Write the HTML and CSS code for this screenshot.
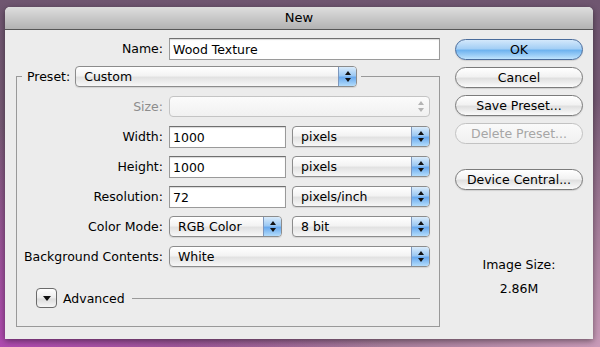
FILE: index.html
```html
<!DOCTYPE html>
<html lang="en">
<head>
    <meta charset="UTF-8">
    <title>New</title>
    <link rel="stylesheet" href="styles.css">
</head>
<body>
    <div class="window">
        <div class="titlebar">New</div>

        <div class="content">
            <div class="main">
                <div class="row name-row">
                    <label class="label">Name:</label>
                    <input class="field name-field" type="text" value="Wood Texture">
                </div>

                <fieldset class="group">
                    <legend class="preset">
                        <span>Preset:</span>
                        <div class="popup preset-popup"><span>Custom</span><i class="arrows"></i></div>
                    </legend>

                    <div class="row">
                        <label class="label disabled">Size:</label>
                        <div class="popup wide off"><span></span><i class="arrows"></i></div>
                    </div>

                    <div class="row">
                        <label class="label">Width:</label>
                        <input class="field num" type="text" value="1000">
                        <div class="popup unit"><span>pixels</span><i class="arrows"></i></div>
                    </div>

                    <div class="row">
                        <label class="label">Height:</label>
                        <input class="field num" type="text" value="1000">
                        <div class="popup unit"><span>pixels</span><i class="arrows"></i></div>
                    </div>

                    <div class="row">
                        <label class="label">Resolution:</label>
                        <input class="field num" type="text" value="72">
                        <div class="popup unit"><span>pixels/inch</span><i class="arrows"></i></div>
                    </div>

                    <div class="row">
                        <label class="label">Color Mode:</label>
                        <div class="popup mode"><span>RGB Color</span><i class="arrows"></i></div>
                        <div class="popup unit"><span>8 bit</span><i class="arrows"></i></div>
                    </div>

                    <div class="row">
                        <label class="label">Background Contents:</label>
                        <div class="popup wide"><span>White</span><i class="arrows"></i></div>
                    </div>

                    <div class="advanced">
                        <button class="disclosure"></button>
                        <span>Advanced</span>
                        <div class="rule"></div>
                    </div>
                </fieldset>
            </div>

            <div class="side">
                <button class="btn default">OK</button>
                <button class="btn">Cancel</button>
                <button class="btn">Save Preset...</button>
                <button class="btn disabled">Delete Preset...</button>
                <button class="btn central">Device Central...</button>

                <div class="image-size">
                    <div>Image Size:</div>
                    <div class="size-value">2.86M</div>
                </div>
            </div>
        </div>
    </div>
</body>
</html>
```

FILE: styles.css
```css
body {
    margin: 0;
    width: 600px;
    height: 347px;
    overflow: hidden;
    font-family: "DejaVu Sans", sans-serif;
    font-size: 12.5px;
    color: #000;
    background:
        radial-gradient(ellipse at 0% 100%, #b04ab0 0%, rgba(176, 74, 176, 0) 45%),
        radial-gradient(ellipse at 100% 100%, #c89ab8 0%, rgba(200, 154, 184, 0) 50%),
        linear-gradient(#6f5670, #87637f);
}

/* Dialog window */
.window {
    margin: 7px 0 0 5px;
    width: 588px;
    height: 332px;
    background-color: #ececec;
    border-radius: 5px 5px 0 0;
    box-shadow: 0 2px 6px rgba(0, 0, 0, 0.45);
    overflow: hidden;
}

.titlebar {
    height: 22px;
    line-height: 22px;
    text-align: center;
    font-size: 13px;
    background: linear-gradient(#dedede, #b2b2b2);
    border-bottom: 1px solid #565656;
}

.content {
    display: flex;
}

.main {
    box-sizing: border-box;
    width: 435px;
    padding-left: 11px;
}

.row {
    display: flex;
    align-items: center;
    gap: 6px;
    height: 21px;
    margin-top: 9px;
}

.name-row {
    margin-top: 8px;
}

.label {
    width: 147px;
    text-align: right;
    flex-shrink: 0;
    white-space: nowrap;
}

.label.disabled {
    color: #8c8c8c;
}

.group .label {
    width: 146px;
}

/* Text fields */
.field {
    box-sizing: border-box;
    height: 22px;
    margin: 0;
    padding: 1px 3px 0;
    font: inherit;
    border: 1px solid #9a9a9a;
    border-top-color: #6f6f6f;
    box-shadow: inset 0 1px 1px rgba(0, 0, 0, 0.15);
    background: #fff;
    outline: none;
}

.name-field {
    width: 271px;
}

.num {
    width: 117px;
}

/* Preset group */
.group {
    margin: 7px 0 0;
    padding: 0 9px 18px 0;
    width: 413px;
    border: 1px solid #999;
    box-sizing: content-box;
}

.preset {
    display: flex;
    align-items: center;
    gap: 5px;
    margin-left: 5px;
    padding: 0 4px 0 5px;
    height: 21px;
}

.preset-popup {
    width: 282px;
}

/* Popup buttons */
.popup {
    box-sizing: border-box;
    display: flex;
    align-items: center;
    height: 21px;
    border: 1px solid #8c8c8c;
    border-radius: 4px;
    background: linear-gradient(#ffffff, #f3f3f3 45%, #e2e2e2 55%, #f7f7f7);
    box-shadow: 0 1px 1px rgba(0, 0, 0, 0.1);
    overflow: hidden;
}

.popup span {
    flex: 1;
    padding-left: 8px;
    white-space: nowrap;
}

.arrows {
    position: relative;
    width: 17px;
    height: 100%;
    border-left: 1px solid #7d97bd;
    background: linear-gradient(#d9ebfb, #9cc9f3 45%, #6aaaee 55%, #b3dcfb);
}

.arrows::before,
.arrows::after {
    content: "";
    position: absolute;
    left: 6px;
    border-left: 3px solid transparent;
    border-right: 3px solid transparent;
}

.arrows::before {
    top: 4px;
    border-bottom: 4px solid #111;
}

.arrows::after {
    bottom: 4px;
    border-top: 4px solid #111;
}

.wide {
    width: 261px;
}

.unit {
    width: 138px;
}

.mode {
    width: 113px;
    margin-right: 4px;
}

.popup.off {
    border-color: #c4c4c4;
    background: linear-gradient(#fbfbfb, #f1f1f1);
    box-shadow: none;
}

.popup.off .arrows {
    border-left: none;
    background: none;
}

.popup.off .arrows::before {
    border-bottom-color: #b4b4b4;
}

.popup.off .arrows::after {
    border-top-color: #b4b4b4;
}

/* Advanced */
.advanced {
    display: flex;
    align-items: center;
    margin-top: 21px;
    padding-left: 19px;
    padding-right: 10px;
    height: 20px;
}

.disclosure {
    position: relative;
    width: 21px;
    height: 20px;
    padding: 0;
    margin-right: 6px;
    border: 1px solid #6b6b6b;
    border-radius: 4px;
    background: linear-gradient(#ffffff, #ececec 50%, #dcdcdc 55%, #f6f6f6);
}

.disclosure::after {
    content: "";
    position: absolute;
    left: 6px;
    top: 7px;
    border-left: 4px solid transparent;
    border-right: 4px solid transparent;
    border-top: 5px solid #111;
}

.advanced .rule {
    flex: 1;
    margin-left: 7px;
    border-top: 1px solid #9a9a9a;
}

/* Right column */
.side {
    display: flex;
    flex-direction: column;
    margin-left: 15px;
    padding-top: 9px;
    width: 128px;
}

.btn {
    height: 21px;
    margin: 0 0 7px;
    padding: 0;
    font: inherit;
    color: #000;
    border: 1px solid #7b7b7b;
    border-radius: 11px;
    background: linear-gradient(#ffffff, #f2f2f2 45%, #e0e0e0 55%, #fbfbfb);
    box-shadow: 0 1px 1px rgba(0, 0, 0, 0.12);
}

.btn.default {
    border-color: #4a6c9b;
    background: linear-gradient(#d3e8fb, #a4cff5 45%, #6fb3ef 55%, #bfe3fd);
}

.btn.disabled {
    color: #a6a6a6;
    border-color: #c2c2c2;
    background: linear-gradient(#fafafa, #f0f0f0);
    box-shadow: none;
}

.btn.central {
    margin-top: 18px;
}

.image-size {
    margin-top: 56px;
    text-align: center;
    line-height: 24px;
}
```
